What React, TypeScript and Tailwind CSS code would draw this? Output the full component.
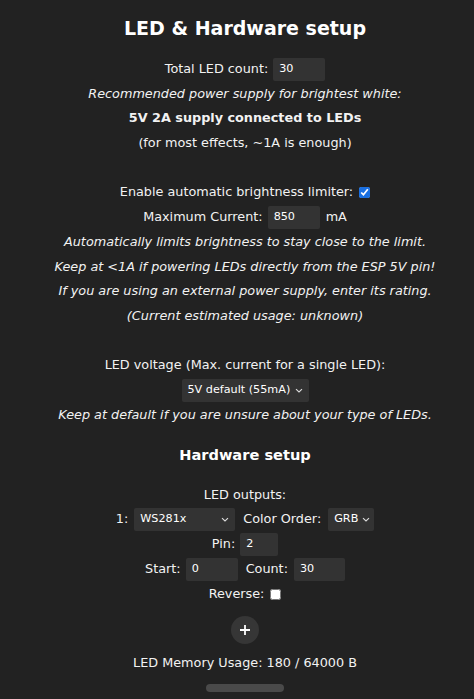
import React from "react";

const Input = ({ value, w }: { value: string; w: string }) => (
  <span
    className={`inline-flex items-center h-[23px] bg-[#333333] rounded-[2px] pl-[6px] text-[11.2px] text-white align-middle ${w}`}
  >
    {value}
  </span>
);

const Chevron = () => (
  <svg width="8" height="5" viewBox="0 0 8 5" className="ml-auto shrink-0">
    <path d="M1 1.2l3 2.8 3-2.8" stroke="#ddd" strokeWidth="1.1" fill="none" />
  </svg>
);

const Select = ({ value, w }: { value: string; w: string }) => (
  <span
    className={`inline-flex items-center h-[23px] bg-[#333333] rounded-[2px] pl-[6px] pr-[6px] gap-[4px] text-[11.2px] text-white align-middle whitespace-nowrap ${w}`}
  >
    <span>{value}</span>
    <Chevron />
  </span>
);

export default function App() {
  return (
    <div
      className="min-h-[699px] bg-[#222222] text-[#f2f2f2] text-center pl-[16px] overflow-hidden"
      style={{ fontFamily: '"DejaVu Sans", Verdana, sans-serif' }}
    >
      <div className="text-[12.8px] leading-[24.7px]">
        <h1 className="pt-[13px] h-[43px] leading-[30px] text-[19px] font-bold text-white">
          LED &amp; Hardware setup
        </h1>
        <div className="mt-[14px]">
          <div className="h-[24.7px] flex items-center justify-center gap-[5px]">
            <span>Total LED count:</span>
            <Input value="30" w="w-[52px]" />
          </div>
          <div className="h-[24.7px] italic">Recommended power supply for brightest white:</div>
          <div className="h-[24.7px] font-bold">5V 2A supply connected to LEDs</div>
          <div className="h-[24.7px]">(for most effects, ~1A is enough)</div>
          <div className="h-[24.7px]"></div>
          <div className="h-[24.7px] flex items-center justify-center gap-[6px]">
            <span>Enable automatic brightness limiter:</span>
            <input
              type="checkbox"
              defaultChecked
              className="w-[11px] h-[11px] m-0 accent-[#1a6fe0]"
            />
          </div>
          <div className="h-[24.7px] flex items-center justify-center gap-[5px]">
            <span>Maximum Current:</span>
            <Input value="850" w="w-[52px]" />
            <span className="ml-[1px]">mA</span>
          </div>
          <div className="h-[24.7px] italic">Automatically limits brightness to stay close to the limit.</div>
          <div className="h-[24.7px] italic">Keep at &lt;1A if powering LEDs directly from the ESP 5V pin!</div>
          <div className="h-[24.7px] italic">If you are using an external power supply, enter its rating.</div>
          <div className="h-[24.7px] italic">(Current estimated usage: unknown)</div>
          <div className="h-[24.7px]"></div>
          <div className="h-[24.7px]">LED voltage (Max. current for a single LED):</div>
          <div className="h-[24.7px] flex items-center justify-center">
            <Select value="5V default (55mA)" w="w-[127px]" />
          </div>
          <div className="h-[24.7px] italic">Keep at default if you are unsure about your type of LEDs.</div>
        </div>
        <h2 className="mt-[15.6px] h-[24px] leading-[24px] text-[14.6px] font-bold text-white">
          Hardware setup
        </h2>
        <div className="mt-[14.6px]">
          <div className="h-[25px] leading-[25px]">LED outputs:</div>
          <div className="h-[25px] flex items-center justify-center">
            <span className="mr-[6px]">1:</span>
            <Select value="WS281x" w="w-[101px]" />
            <span className="ml-[8px] mr-[7px]">Color Order:</span>
            <Select value="GRB" w="w-[46px]" />
          </div>
          <div className="h-[25px] flex items-center justify-center gap-[5px]">
            <span>Pin:</span>
            <Input value="2" w="w-[38px]" />
          </div>
          <div className="h-[25px] flex items-center justify-center">
            <span className="mr-[5px]">Start:</span>
            <Input value="0" w="w-[52px]" />
            <span className="ml-[8px] mr-[6px]">Count:</span>
            <Input value="30" w="w-[51px]" />
          </div>
          <div className="h-[25px] flex items-center justify-center gap-[6px]">
            <span>Reverse:</span>
            <input type="checkbox" className="w-[11px] h-[11px] m-0" />
          </div>
        </div>
        <div className="mt-[9.5px] flex justify-center">
          <button className="w-[28px] h-[28px] rounded-full bg-[#363636] flex items-center justify-center">
            <svg width="12" height="12" viewBox="0 0 12 12">
              <path d="M6 1v10M1 6h10" stroke="#fff" strokeWidth="1.8" />
            </svg>
          </button>
        </div>
        <div className="mt-[6.6px] h-[24.7px]">LED Memory Usage: 180 / 64000 B</div>
        <div className="mt-[8.6px] flex justify-center">
          <div className="w-[78px] h-[8px] rounded-full bg-[#4a4a4a]"></div>
        </div>
      </div>
    </div>
  );
}
